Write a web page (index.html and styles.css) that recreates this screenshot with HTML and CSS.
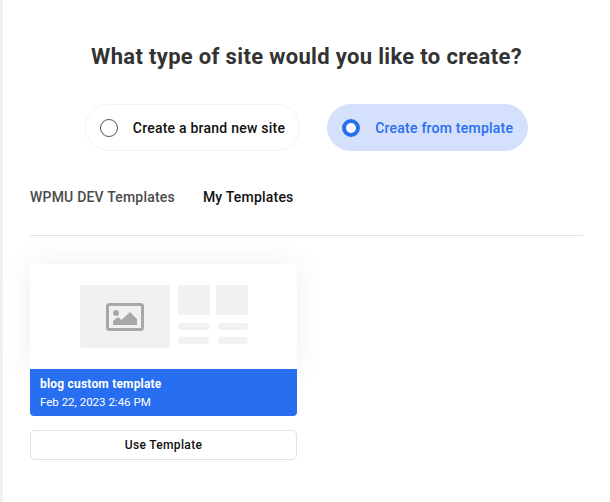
FILE: index.html
```html
<!DOCTYPE html>
<html lang="en">
<head>
<meta charset="utf-8">
<title>Create site</title>
<link rel="stylesheet" href="styles.css">
</head>
<body>
<main class="page">
  <h1 class="title">What type of site would you like to create?</h1>
  <div class="choices">
    <div class="choice">
      <span class="radio"></span>
      <span class="choice-label">Create a brand new site</span>
    </div>
    <div class="choice choice-on">
      <span class="radio radio-on"></span>
      <span class="choice-label">Create from template</span>
    </div>
  </div>
  <nav class="tabs">
    <span class="tab">WPMU DEV Templates</span>
    <span class="tab tab-on">My Templates</span>
  </nav>
  <section class="item">
    <div class="card">
      <div class="preview">
        <div class="hero">
          <svg class="hero-icon" width="38" height="28" viewBox="0 0 38 28">
            <rect x="1.5" y="1.5" width="35" height="25" rx="2" fill="#f1f1f1" stroke="#a8a8a8" stroke-width="3"/>
            <circle cx="10" cy="10" r="3" fill="#a8a8a8"/>
            <path d="M7 22v-4l5-4 3.500 3 8.500-8 7 7v6z" fill="#a8a8a8"/>
          </svg>
        </div>
        <div class="side">
          <div class="thumbs"><span class="thumb"></span><span class="thumb"></span></div>
          <div class="lines"><span class="line"></span><span class="line line-b"></span></div>
          <div class="lines"><span class="line line-c"></span><span class="line line-b"></span></div>
        </div>
      </div>
      <div class="info">
        <div class="name">blog custom template</div>
        <div class="date">Feb 22, 2023 2:46 PM</div>
      </div>
    </div>
    <button class="use" type="button">Use Template</button>
  </section>
</main>
</body>
</html>
```
FILE: styles.css
```css
* { box-sizing: border-box; }
html, body { margin: 0; height: 100%; }
body {
  background: #fff;
  border-left: 3px solid #f1f1f1;
  font-family: Roboto, "Liberation Sans", sans-serif;
  overflow: hidden;
}
.page {
  height: 502px;
  padding: 0 27px;
}
.title {
  margin: 0;
  padding-top: 43px;
  height: 104px;
  font-size: 22px;
  line-height: 28px;
  font-weight: 700;
  letter-spacing: 0.33px;
  color: #333;
  text-align: center;
}
.choices {
  display: flex;
  justify-content: center;
  gap: 27px;
  height: 47px;
}
.choice {
  display: flex;
  align-items: center;
  gap: 15px;
  padding: 0 14px;
  border: 1px solid #f2f2f2;
  border-radius: 24px;
  font-size: 14px;
  font-weight: 500;
  letter-spacing: 0.23px;
  color: #111;
}
.choice-on {
  background: #d4e0fc;
  border-color: #d4e0fc;
  color: #286ef1;
}
.radio {
  width: 18px;
  height: 18px;
  border: 1px solid #555;
  border-radius: 50%;
  background: #fff;
}
.radio-on {
  border: 4px solid #286ef1;
}
.tabs {
  display: flex;
  gap: 28px;
  padding-top: 38px;
  height: 85px;
  border-bottom: 1px solid #e2e2e2;
  font-size: 14px;
  line-height: 17px;
  font-weight: 500;
  letter-spacing: 0.2px;
  width: 553px;
}
.tab { color: #4a4a4a; }
.tab-on { color: #111; }
.item {
  width: 267px;
  margin-top: 28px;
}
.preview {
  height: 105px;
  display: flex;
  gap: 8px;
  padding: 21px 49px 0 50px;
  background: #fff;
  border-radius: 4px 4px 0 0;
  box-shadow: 0 0 30px rgba(0, 0, 0, 0.07);
}
.hero {
  width: 90px;
  height: 63px;
  border-radius: 2px;
  background: #f1f1f1;
  display: flex;
  align-items: center;
  justify-content: center;
}
.side {
  width: 70px;
  display: flex;
  flex-direction: column;
}
.thumbs {
  display: flex;
  justify-content: space-between;
  margin-bottom: 8px;
}
.thumb {
  width: 32px;
  height: 30px;
  border-radius: 2px;
  background: #f1f1f1;
}
.lines {
  display: flex;
  justify-content: space-between;
  margin-bottom: 7px;
}
.line {
  width: 32px;
  height: 7px;
  border-radius: 4px;
  background: #f1f1f1;
}
.line-b { width: 30px; }
.line-c { width: 31px; }
.info {
  height: 47px;
  padding: 7px 10px 0;
  background: #286ef1;
  border-radius: 0 0 4px 4px;
  color: #fff;
}
.name {
  font-size: 12px;
  line-height: 16px;
  font-weight: 700;
  letter-spacing: 0.2px;
}
.date {
  margin-top: 2px;
  font-size: 11.5px;
  line-height: 16px;
}
.use {
  display: block;
  width: 100%;
  height: 30px;
  margin-top: 14px;
  background: #fff;
  border: 1px solid #e2e2e2;
  border-radius: 5px;
  font-family: inherit;
  font-size: 12px;
  font-weight: 500;
  letter-spacing: 0.33px;
  color: #111;
}
```
